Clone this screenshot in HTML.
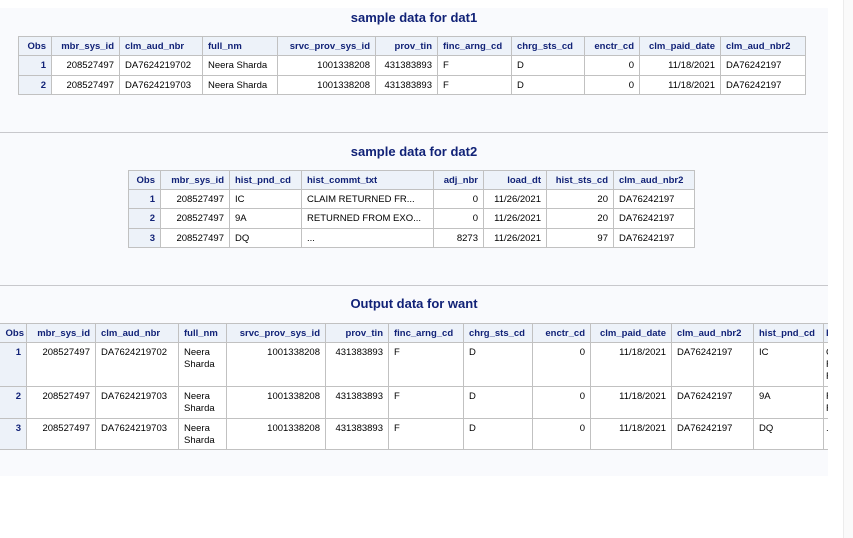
<!DOCTYPE html>
<html><head><style>
body{margin:0;width:853px;height:538px;background:#fff;position:relative;overflow:hidden;font-family:"Liberation Sans",Arial,sans-serif;}
.panel{position:absolute;left:0;top:8px;width:828px;height:468px;background:#f9fafd;overflow:hidden;}
.sb{position:absolute;left:843px;top:0;width:10px;height:538px;background:#fafafa;border-left:1px solid #ececec;}
.t{position:absolute;left:0;width:828px;text-align:center;font-weight:bold;font-size:13px;color:#112277;}
.hr{position:absolute;left:0;width:828px;height:0;border-top:1px solid #c8c8cc;}
table{position:absolute;border-collapse:collapse;table-layout:fixed;font-size:9.5px;}
td,th{border:1px solid #c1c1c1;padding:0 5px;white-space:nowrap;overflow:hidden;vertical-align:top;line-height:12px;padding-top:4px;background:#fff;color:#000;}
th{background:#edf2f9;color:#112277;font-weight:bold;text-align:left;}
th.r,td.r{text-align:right;}
tbody th{text-align:right;}
.w td,.w th{white-space:normal;}
.lc{padding-left:2px !important;padding-right:0 !important;}
</style></head><body>
<div class="panel">
<div class="t" style="top:2px">sample data for dat1</div>
<table style="left:18px;top:28px;width:787px">
<colgroup><col style="width:33px"><col style="width:68px"><col style="width:83px"><col style="width:75px"><col style="width:98px"><col style="width:62px"><col style="width:74px"><col style="width:73px"><col style="width:55px"><col style="width:81px"><col style="width:85px"></colgroup>
<thead><tr style="height:19px"><th class="r">Obs</th><th class="r">mbr_sys_id</th><th>clm_aud_nbr</th><th>full_nm</th><th class="r">srvc_prov_sys_id</th><th class="r">prov_tin</th><th>finc_arng_cd</th><th>chrg_sts_cd</th><th class="r">enctr_cd</th><th class="r">clm_paid_date</th><th>clm_aud_nbr2</th></tr></thead>
<tbody>
<tr style="height:20px"><th>1</th><td class="r">208527497</td><td>DA7624219702</td><td>Neera Sharda</td><td class="r">1001338208</td><td class="r">431383893</td><td>F</td><td>D</td><td class="r">0</td><td class="r">11/18/2021</td><td>DA76242197</td></tr>
<tr style="height:19px"><th>2</th><td class="r">208527497</td><td>DA7624219703</td><td>Neera Sharda</td><td class="r">1001338208</td><td class="r">431383893</td><td>F</td><td>D</td><td class="r">0</td><td class="r">11/18/2021</td><td>DA76242197</td></tr>
</tbody></table>
<div class="hr" style="top:124px"></div>
<div class="t" style="top:136px">sample data for dat2</div>
<table style="left:128px;top:162px;width:566px">
<colgroup><col style="width:32px"><col style="width:69px"><col style="width:72px"><col style="width:132px"><col style="width:50px"><col style="width:63px"><col style="width:67px"><col style="width:81px"></colgroup>
<thead><tr style="height:19px"><th class="r">Obs</th><th class="r">mbr_sys_id</th><th>hist_pnd_cd</th><th>hist_commt_txt</th><th class="r">adj_nbr</th><th class="r">load_dt</th><th class="r">hist_sts_cd</th><th>clm_aud_nbr2</th></tr></thead>
<tbody>
<tr style="height:19px"><th>1</th><td class="r">208527497</td><td>IC</td><td>CLAIM RETURNED FR...</td><td class="r">0</td><td class="r">11/26/2021</td><td class="r">20</td><td>DA76242197</td></tr>
<tr style="height:20px"><th>2</th><td class="r">208527497</td><td>9A</td><td>RETURNED FROM EXO...</td><td class="r">0</td><td class="r">11/26/2021</td><td class="r">20</td><td>DA76242197</td></tr>
<tr style="height:19px"><th>3</th><td class="r">208527497</td><td>DQ</td><td>...</td><td class="r">8273</td><td class="r">11/26/2021</td><td class="r">97</td><td>DA76242197</td></tr>
</tbody></table>
<div class="hr" style="top:277px"></div>
<div class="t" style="top:288px">Output data for want</div>
<table class="w" style="left:-1px;top:315px;width:850px">
<colgroup><col style="width:27px"><col style="width:69px"><col style="width:83px"><col style="width:48px"><col style="width:99px"><col style="width:63px"><col style="width:75px"><col style="width:69px"><col style="width:58px"><col style="width:81px"><col style="width:82px"><col style="width:70px"><col style="width:26px"></colgroup>
<thead><tr style="height:19px"><th class="r" style="padding:4px 2px 0 2px">Obs</th><th class="r">mbr_sys_id</th><th>clm_aud_nbr</th><th style="padding-right:2px">full_nm</th><th class="r">srvc_prov_sys_id</th><th class="r">prov_tin</th><th>finc_arng_cd</th><th>chrg_sts_cd</th><th class="r">enctr_cd</th><th class="r">clm_paid_date</th><th>clm_aud_nbr2</th><th>hist_pnd_cd</th><th class="lc">h</th></tr></thead>
<tbody>
<tr style="height:44px"><th>1</th><td class="r">208527497</td><td>DA7624219702</td><td>Neera Sharda</td><td class="r">1001338208</td><td class="r">431383893</td><td>F</td><td>D</td><td class="r">0</td><td class="r">11/18/2021</td><td>DA76242197</td><td>IC</td><td class="lc">C<br>R<br>F</td></tr>
<tr style="height:32px"><th>2</th><td class="r">208527497</td><td>DA7624219703</td><td>Neera Sharda</td><td class="r">1001338208</td><td class="r">431383893</td><td>F</td><td>D</td><td class="r">0</td><td class="r">11/18/2021</td><td>DA76242197</td><td>9A</td><td class="lc">R<br>F</td></tr>
<tr style="height:31px"><th>3</th><td class="r">208527497</td><td>DA7624219703</td><td>Neera Sharda</td><td class="r">1001338208</td><td class="r">431383893</td><td>F</td><td>D</td><td class="r">0</td><td class="r">11/18/2021</td><td>DA76242197</td><td>DQ</td><td class="lc">...</td></tr>
</tbody></table>
</div>
<div class="sb"></div>
</body></html>
